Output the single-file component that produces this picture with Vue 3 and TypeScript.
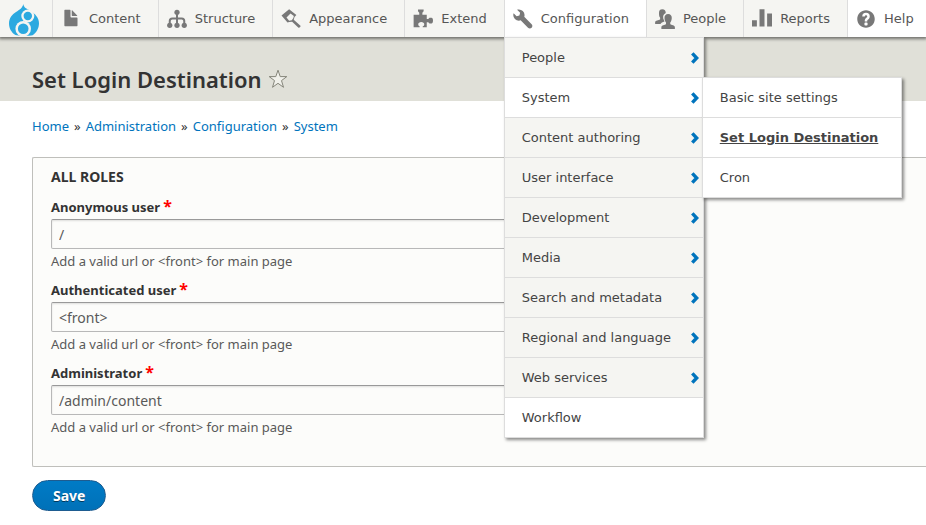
<script setup lang="ts">
import { ref } from 'vue'

interface Tab {
  label: string
  icon: string
}

interface MenuItem {
  label: string
  children?: string[]
  expandable: boolean
}

interface RoleField {
  id: string
  label: string
  value: string
}

const tabs: Tab[] = [
  { label: 'Content', icon: 'file' },
  { label: 'Structure', icon: 'orgchart' },
  { label: 'Appearance', icon: 'brush' },
  { label: 'Extend', icon: 'puzzle' },
  { label: 'Configuration', icon: 'wrench' },
  { label: 'People', icon: 'people' },
  { label: 'Reports', icon: 'bars' },
  { label: 'Help', icon: 'help' },
]

const menu: MenuItem[] = [
  { label: 'People', expandable: true },
  { label: 'System', expandable: true, children: ['Basic site settings', 'Set Login Destination', 'Cron'] },
  { label: 'Content authoring', expandable: true },
  { label: 'User interface', expandable: true },
  { label: 'Development', expandable: true },
  { label: 'Media', expandable: true },
  { label: 'Search and metadata', expandable: true },
  { label: 'Regional and language', expandable: true },
  { label: 'Web services', expandable: true },
  { label: 'Workflow', expandable: false },
]

const crumbs: string[] = ['Home', 'Administration', 'Configuration', 'System']

const fields = ref<RoleField[]>([
  { id: 'anonymous', label: 'Anonymous user', value: '/' },
  { id: 'authenticated', label: 'Authenticated user', value: '<front>' },
  { id: 'administrator', label: 'Administrator', value: '/admin/content' },
])

const currentPage = 'Set Login Destination'
</script>

<template>
  <nav class="toolbar">
    <a class="home" href="#" aria-label="Home">
      <svg class="logo" viewBox="0 0 32 32" aria-hidden="true">
        <path
          d="M15.300 0C15.800 3.600 18.600 4.600 21.800 6.500C27.500 9.800 31 14 31 19.300C31 24.300 28.300 28.800 24.600 31.200C21 32 10 32 7.400 31C3.500 28.600 1 24.500 1 19.500C1 14 4.300 10.400 8 8C11.600 5.700 14.500 4 15.300 0Z"
          fill="#2ba9e0"
        />
        <circle cx="19.800" cy="12" r="6.500" fill="#f5f5f2" />
        <circle cx="15.200" cy="24.800" r="7.800" fill="#f5f5f2" />
        <circle cx="19.800" cy="12" r="4.200" fill="#2ba9e0" />
        <circle cx="15.200" cy="24.800" r="5.300" fill="#2ba9e0" />
      </svg>
    </a>
    <ul class="tabs">
      <li v-for="tab in tabs" :key="tab.label" class="tab" :class="tab.icon">
        <a class="tab-link" href="#">
          <svg class="icon" viewBox="0 0 16 16" aria-hidden="true">
            <path
              v-if="tab.icon === 'file'"
              d="M12.700 6.800h-4.500a.6.600 0 0 1-.6-.6V1a.5.500 0 0 0-.5-.5H3.200a.5.500 0 0 0-.5.500v12.200a.5.500 0 0 0 .5.500h9.500a.5.500 0 0 0 .5-.5V7.300a.5.500 0 0 0-.5-.5zM9.100 5.500h3.700c.3 0 .35-.15.150-.35L8.950 1.050C8.750.850 8.600.9 8.600 1.200V5a.5.500 0 0 0 .5.500z"
            />
            <g v-else-if="tab.icon === 'orgchart'">
              <circle cx="8" cy="2.600" r="2.100" />
              <circle cx="2.200" cy="13" r="2.100" />
              <circle cx="8" cy="13" r="2.100" />
              <circle cx="13.800" cy="13" r="2.100" />
              <path d="M8 3v9M2.200 12V9.500q0-2 2-2h7.600q2 0 2 2V12" fill="none" stroke="#787878" stroke-width="1.600" />
            </g>
            <path
              v-else-if="tab.icon === 'brush'"
              fill-rule="evenodd"
              d="M6.500.1L12.300 4.800L10.800 6.300L10.200 8.600L15.600 13.300C16 13.900 14.700 15.300 14 14.900L8.900 10.200L6.600 10.300L5.200 10.800L.4 5.200zM7.600 3.500L10.300 5.600L9.800 7.400L8.600 8.900L6.500 9.300L4.400 6.700z"
            />
            <path
              v-else-if="tab.icon === 'puzzle'"
              d="M4 .4h4.500v1.400l-1 1.200V4.500H11V8h1.200l1-1h1.600c.7 0 1.200.7 1.200 2.200s-.5 2.300-1.200 2.300h-1.600l-1-1H11V14.500H7.800v-.7c1-.5 1.200-1 1.200-1.700 0-1-1-1.800-2.400-1.800s-2.400.8-2.400 1.800c0 .8.300 1.300 1.100 1.700v.7H.5V4.500H5V3L4 1.800z"
            />
            <path
              v-else-if="tab.icon === 'wrench'"
              d="M14.900 12.100L9 6.200c.15-.45.250-.95.250-1.500A4.600 4.600 0 0 0 4.700.3c-.5 0-1 .1-1.450.250l2.450 2.400-.6 2.200-2.200.6L.5 3.350C.3 3.800.2 4.300.2 4.800a4.500 4.500 0 0 0 4.500 4.500c.5 0 1-.1 1.400-.25l5.900 5.900c.8.800 2.100.8 2.900 0s.8-2.050 0-2.850z"
            />
            <g v-else-if="tab.icon === 'people'">
              <path d="M5.800.2c2 0 2.800 1.200 2.800 3C7 4 6.200 5.400 6.600 7.600l1 2.300c-1.600.5-2.800 1-3.200 2H.1V10.500c0-1.300 3-1.400 4-2.300V7C3.200 5.900 3.200 4.700 3.200 3 3.200 1 4.200.2 5.800.2z" />
              <path d="M10.500 4c2 0 2.900 1.400 2.900 3 0 1.500-.3 2.700-1.200 3.800v1.100c.8 1 3.700.9 3.700 2.600V16H5.100v-1.500c0-1.700 2.900-1.600 3.700-2.600v-1.100C7.900 9.700 7.600 8.500 7.600 7c0-1.600.9-3 2.900-3z" />
            </g>
            <path v-else-if="tab.icon === 'bars'" d="M0 9h3.900v5H0zM6 .2h4V14H6zM12.100 3.500H16V14h-3.900z" />
            <path
              v-else
              d="M8 1C4.130 1 1 4.130 1 8s3.130 7 7 7 7-3.130 7-7-3.130-7-7-7zm3 5c0 .55-.16 1.080-.48 1.590l-.16.220c-.07.090-.19.240-.36.390-.17.150-.35.300-.54.450l-.2.190-.15.130-.09.170-.02.230v.63H7v-.7c.030-.4.080-.73.200-1 .13-.27.270-.5.440-.69l.220-.21.170-.15.140-.13c.180-.14.350-.28.510-.42l.150-.18c.1-.15.170-.32.170-.52a1 1 0 0 0-2 0H5a3 3 0 0 1 6 0zm-1.750 6.600c0 .35-.28.630-.62.630H7.380a.63.630 0 0 1-.63-.62v-1.240c0-.34.280-.62.630-.62h1.250c.340 0 .620.280.620.620z"
            />
          </svg>
          {{ tab.label }}
        </a>
        <ul v-if="tab.label === 'Configuration'" class="menu">
          <li
            v-for="item in menu"
            :key="item.label"
            class="menu-item"
            :class="{ open: item.children, leaf: !item.expandable }"
          >
            <a class="menu-link" href="#">
              {{ item.label }}
              <svg v-if="item.expandable" class="chevron" viewBox="0 0 8 12" aria-hidden="true">
                <path d="M1.300 1.300L5.700 6L1.300 10.700" />
              </svg>
            </a>
            <ul v-if="item.children" class="menu submenu">
              <li v-for="child in item.children" :key="child" class="menu-item leaf">
                <a class="menu-link" :class="{ active: child === currentPage }" href="#">{{ child }}</a>
              </li>
            </ul>
          </li>
        </ul>
      </li>
    </ul>
  </nav>

  <header class="page-header">
    <h1 class="title">{{ currentPage }}</h1>
    <button class="star" type="button" aria-label="Add to shortcuts">
      <svg class="star-icon" viewBox="0 0 20 20" aria-hidden="true">
        <path d="M10 1.200L12.200 7.600H18.800L13.500 11.600L15.500 18.300L10 14.300L4.500 18.300L6.500 11.600L1.200 7.600H7.800Z" />
      </svg>
    </button>
  </header>

  <main class="content">
    <nav class="breadcrumb">
      <template v-for="(crumb, i) in crumbs" :key="crumb">
        <span v-if="i > 0" class="separator">»</span><a href="#">{{ crumb }}</a>
      </template>
    </nav>

    <form @submit.prevent>
      <section class="roles" aria-labelledby="roles-heading">
        <h2 id="roles-heading" class="legend">All roles</h2>
        <div v-for="field in fields" :key="field.id" class="field">
          <label class="label" :for="field.id">{{ field.label }}<span class="required">*</span></label>
          <input :id="field.id" v-model="field.value" class="input" type="text" required />
          <p class="description">Add a valid url or &lt;front&gt; for main page</p>
        </div>
      </section>
      <button class="save" type="submit">Save</button>
    </form>
  </main>
</template>

<style>
body {
  background: #fff;
}
</style>

<style scoped>
.toolbar {
  position: relative;
  z-index: 2;
  display: flex;
  height: 37px;
  background: #fff;
  box-shadow: 0 1px 3px 1px rgba(0, 0, 0, 0.5);
  font: 13px/37px "DejaVu Sans", Verdana, sans-serif;
}

.home {
  display: flex;
  flex-shrink: 0;
  align-items: center;
  box-sizing: border-box;
  width: 52px;
  padding: 2px 0 0 8px;
  background: #f5f5f2;
}

.logo {
  width: 32px;
  height: 32px;
}

.tabs,
.menu {
  margin: 0;
  padding: 0;
  list-style: none;
}

.tabs {
  display: flex;
}

.tab {
  position: relative;
  border-left: 1px solid #ddd;
  background: #f5f5f2;
}

.tab.wrench,
.tab.help {
  background: #fff;
}

.tab-link {
  display: flex;
  align-items: center;
  gap: 8px;
  padding: 0 17px 0 8px;
  color: #565656;
  text-decoration: none;
  white-space: nowrap;
}

.icon {
  width: 20px;
  height: 20px;
  fill: #787878;
}

.menu {
  position: absolute;
  top: 37px;
  left: 0;
  box-sizing: border-box;
  width: 200px;
  border: 1px solid #ddd;
  border-bottom: 0;
  background: #f5f5f2;
  box-shadow: 2px 2px 3px rgba(0, 0, 0, 0.45);
}

.tab > .menu {
  left: -1px;
}

.menu-item {
  position: relative;
  border-bottom: 1px solid #ddd;
}

.menu-item.open,
.menu-item.leaf {
  background: #fff;
}

.menu-link {
  display: flex;
  align-items: center;
  justify-content: space-between;
  padding: 0 4px 0 17px;
  color: #444;
  line-height: 39px;
  text-decoration: none;
  white-space: nowrap;
}

.menu-link.active {
  font-weight: bold;
  text-decoration: underline;
}

.chevron {
  width: 8px;
  height: 12px;
  fill: none;
  stroke: #0074bd;
  stroke-width: 3.4;
}

.menu-item > .submenu {
  top: -1px;
  left: 197px;
}

.page-header {
  display: flex;
  align-items: center;
  gap: 6px;
  height: 44px;
  padding: 20px 32px 0;
  background: #e0e0d8;
}

.title {
  margin: 0;
  color: #333;
  font: 600 22px/32px "Noto Sans", "Lucida Grande", sans-serif;
}

.star {
  display: flex;
  padding: 0;
  border: 0;
  background: none;
}

.star-icon {
  width: 20px;
  height: 20px;
  fill: #f0f0ea;
  stroke: #85857a;
  stroke-width: 1;
}

.content {
  padding-left: 32px;
  color: #333;
  font: 13px/24px "Noto Sans", "Lucida Grande", sans-serif;
}

.breadcrumb {
  padding: 13px 0 19px;
}

.breadcrumb a {
  color: #0074bd;
  text-decoration: none;
}

.separator {
  margin: 0 5px;
}

.roles {
  padding: 7px 18px 22px;
  border: 1px solid #bfbfbb;
  border-right: 0;
  border-radius: 2px 0 0 2px;
  background: #fcfcfa;
}

.legend {
  margin: 0 0 6px;
  font-size: 14px;
  font-weight: bold;
  line-height: 24px;
  text-transform: uppercase;
}

.field {
  margin-bottom: 5px;
}

.label {
  display: block;
  font-weight: bold;
}

.required {
  margin-left: 3px;
  color: #f00;
  font-size: 16px;
  line-height: 16px;
}

.input {
  display: block;
  box-sizing: border-box;
  width: 480px;
  max-width: 100%;
  height: 30px;
  padding: 0 7px;
  border: 1px solid #b8b8b8;
  border-top-color: #999;
  border-radius: 2px;
  background: #fcfcfa;
  box-shadow: inset 0 1px 2px rgba(0, 0, 0, 0.12);
  color: #595959;
  font: inherit;
  font-size: 14px;
}

.description {
  margin: 0;
  color: #595959;
}

.save {
  height: 31px;
  margin-top: 13px;
  padding: 0 20px;
  border: 1px solid #1e5c90;
  border-radius: 16px;
  background: linear-gradient(#007bc6, #0071b8);
  color: #fff;
  font: 700 14px/28px "Noto Sans", "Lucida Grande", sans-serif;
  text-shadow: 0 1px rgba(0, 0, 0, 0.5);
}
</style>
